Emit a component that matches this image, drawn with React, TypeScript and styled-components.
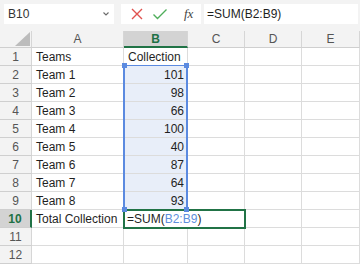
import React from 'react';
import styled, { createGlobalStyle, css } from 'styled-components';

const GlobalStyle = createGlobalStyle`
  html, body {
    margin: 0;
    padding: 0;
    background: #ffffff;
  }
  body {
    font-family: "Liberation Sans", Arial, sans-serif;
    font-size: 12px;
    color: #1f1f1f;
  }
`;

const COLUMNS = ['A', 'B', 'C', 'D', 'E'];

const rows: [string, string][] = [
  ['Teams', 'Collection'],
  ['Team 1', '101'],
  ['Team 2', '98'],
  ['Team 3', '66'],
  ['Team 4', '100'],
  ['Team 5', '40'],
  ['Team 6', '87'],
  ['Team 7', '64'],
  ['Team 8', '93'],
  ['Total Collection', ''],
  ['', ''],
  ['', ''],
];

function App() {
  return (
    <>
      <GlobalStyle />
      <StyledWindow>
        <StyledToolbar>
          <StyledNameBox>
            <span>B10</span>
            <svg width="8" height="6" viewBox="0 0 8 6">
              <path d="M1.5 1.5 L4 4 L6.5 1.5" fill="none" stroke="#6b6b6b" strokeWidth="1.1" />
            </svg>
          </StyledNameBox>
          <StyledActions>
            <svg width="14" height="14" viewBox="0 0 14 14">
              <path d="M2 2 L12 12 M12 2 L2 12" stroke="#e0524f" strokeWidth="1.4" />
            </svg>
            <svg width="16" height="14" viewBox="0 0 16 14">
              <path d="M1.5 7.5 L5.5 11.5 L14.5 2.5" fill="none" stroke="#4fae5b" strokeWidth="1.4" />
            </svg>
            <StyledFx>fx</StyledFx>
          </StyledActions>
          <StyledFormula>=SUM(B2:B9)</StyledFormula>
        </StyledToolbar>

        <StyledGrid>
          <StyledCorner>
            <svg width="15" height="14" viewBox="0 0 15 14">
              <path d="M15 0 L15 14 L0 14 Z" fill="#bcbcbc" />
            </svg>
          </StyledCorner>
          {COLUMNS.map((col) => (
            <StyledColHeader key={col} selected={col === 'B'}>
              {col}
            </StyledColHeader>
          ))}

          {rows.map(([team, value], i) => {
            const rowNo = i + 1;
            const gridRow = rowNo + 1;
            const inRange = rowNo >= 2 && rowNo <= 9;
            const isActive = rowNo === 10;
            return (
              <React.Fragment key={rowNo}>
                <StyledRowHeader $row={gridRow} selected={isActive}>
                  {rowNo}
                </StyledRowHeader>
                <StyledCell $row={gridRow} $col={2}>
                  {team}
                </StyledCell>
                {isActive ? (
                  <StyledEditCell $row={gridRow} $col={3}>
                    =SUM(<StyledRef>B2:B9</StyledRef>)
                  </StyledEditCell>
                ) : (
                  <>
                    <StyledCell $row={gridRow} $col={3} numeric={inRange} highlighted={inRange}>
                      {value}
                    </StyledCell>
                    <StyledCell $row={gridRow} $col={4} />
                  </>
                )}
                <StyledCell $row={gridRow} $col={5} />
                <StyledCell $row={gridRow} $col={6} />
              </React.Fragment>
            );
          })}

          <StyledSelection>
            <StyledHandle corner="tl" />
            <StyledHandle corner="tr" />
            <StyledHandle corner="bl" />
            <StyledHandle corner="br" />
          </StyledSelection>
        </StyledGrid>
      </StyledWindow>
    </>
  );
}

const StyledWindow = styled.div`
  width: 360px;
  height: 264px;
  overflow: hidden;
  background: #ffffff;
`;

const StyledToolbar = styled.div`
  display: flex;
  align-items: flex-start;
  height: 31px;
  padding: 4px 2px 0 4px;
  box-sizing: border-box;
  background: #f3f3f3;
`;

const StyledNameBox = styled.div`
  display: flex;
  align-items: center;
  justify-content: space-between;
  width: 110px;
  height: 20px;
  padding: 0 4px;
  box-sizing: border-box;
  background: #ffffff;
  color: #333333;
`;

const StyledActions = styled.div`
  display: flex;
  align-items: center;
  width: 80px;
  height: 20px;
  margin-left: 7px;
  padding-left: 9px;
  gap: 8px;
  box-sizing: border-box;
  background: #ffffff;
`;

const StyledFx = styled.span`
  margin-left: 8px;
  font-family: "Liberation Serif", "Times New Roman", serif;
  font-style: italic;
  font-size: 13px;
  color: #444444;
`;

const StyledFormula = styled.div`
  flex: 1;
  display: flex;
  align-items: center;
  height: 20px;
  margin-left: 3px;
  padding-left: 3px;
  background: #ffffff;
  color: #1f1f1f;
`;

const StyledGrid = styled.div`
  display: grid;
  grid-template-columns: 32px 92px 64px 57px 57px 58px;
  grid-template-rows: 17px repeat(12, 18px);
`;

const headerBase = css`
  display: flex;
  align-items: center;
  justify-content: center;
  box-sizing: border-box;
  background: #f3f3f3;
  color: #555555;
  border-right: 1px solid #d6d6d6;
  border-bottom: 1px solid #cfcfcf;
`;

const StyledCorner = styled.div`
  ${headerBase};
  grid-row: 1;
  grid-column: 1;
  justify-content: flex-end;
  align-items: flex-end;
  padding: 0 1px 1px 0;
`;

const StyledColHeader = styled.div<{ selected?: boolean }>`
  ${headerBase};
  grid-row: 1;
  ${({ selected }) =>
    selected &&
    css`
      background: #d3d3d3;
      color: #1e7145;
      font-weight: bold;
      border-bottom: 2px solid #217346;
    `}
`;

const StyledRowHeader = styled.div<{ $row: number; selected?: boolean }>`
  ${headerBase};
  grid-row: ${({ $row }) => $row};
  grid-column: 1;
  ${({ selected }) =>
    selected &&
    css`
      background: #d3d3d3;
      color: #1e7145;
      font-weight: bold;
      border-right: 2px solid #217346;
    `}
`;

const StyledCell = styled.div<{
  $row: number;
  $col: number;
  numeric?: boolean;
  highlighted?: boolean;
}>`
  grid-row: ${({ $row }) => $row};
  grid-column: ${({ $col }) => $col};
  display: flex;
  align-items: center;
  justify-content: ${({ numeric }) => (numeric ? 'flex-end' : 'flex-start')};
  padding: 0 3px 0 4px;
  box-sizing: border-box;
  white-space: nowrap;
  border-right: 1px solid #dcdcdc;
  border-bottom: 1px solid #dcdcdc;
  background: ${({ highlighted }) => (highlighted ? '#e8eef9' : '#ffffff')};
`;

const StyledEditCell = styled(StyledCell)`
  grid-column: ${({ $col }) => $col} / span 2;
  position: relative;
  z-index: 2;
  padding-left: 3px;
  outline: 2px solid #217346;
  outline-offset: -1px;
`;

const StyledRef = styled.span`
  color: #5d8fdc;
`;

const StyledSelection = styled.div`
  grid-column: 3;
  grid-row: 3 / 11;
  position: relative;
  z-index: 3;
  margin: -1px 0 0 -1px;
  border: 1px solid #5b8ae0;
  border-bottom: 0;
  border-left-width: 2px;
  border-right-width: 2px;
  pointer-events: none;
`;

const handlePos = {
  tl: css`top: -3px; left: -3px;`,
  tr: css`top: -3px; right: -3px;`,
  bl: css`bottom: -2px; left: -3px;`,
  br: css`bottom: -2px; right: -3px;`,
};

const StyledHandle = styled.span<{ corner: keyof typeof handlePos }>`
  position: absolute;
  width: 5px;
  height: 5px;
  background: #5b8ae0;
  ${({ corner }) => handlePos[corner]};
`;

export default App;
